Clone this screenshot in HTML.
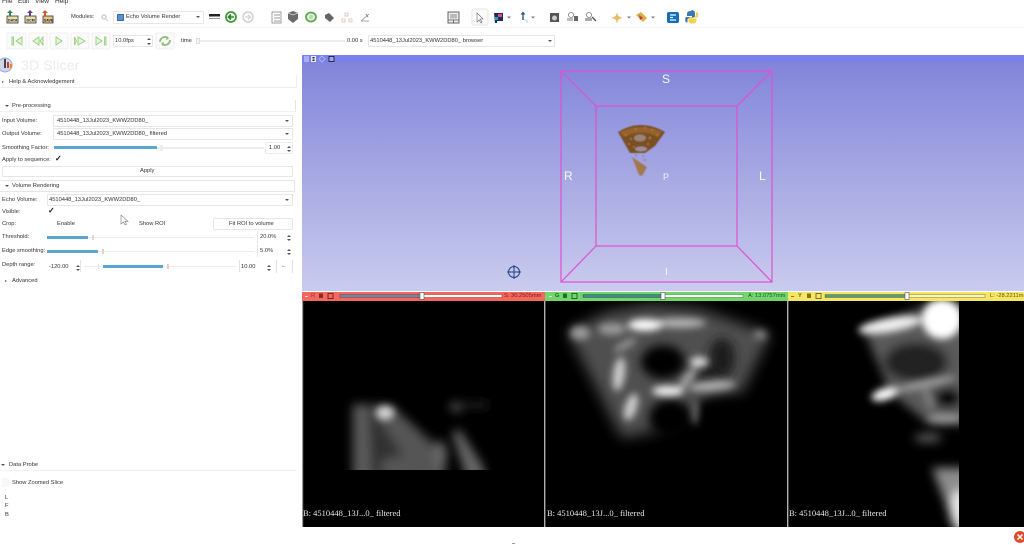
<!DOCTYPE html>
<html><head><meta charset="utf-8">
<style>
html,body{margin:0;padding:0;background:#fff;width:1024px;height:545px;overflow:hidden}
body{position:relative;font-family:"Liberation Sans",sans-serif}
.soft{position:absolute;left:0;top:0;width:1024px;height:545px;filter:blur(.3px)}
.t{position:absolute;white-space:nowrap;font-size:5.75px;line-height:8px;color:#333;transform:translateY(1px)}
.b{position:absolute;box-sizing:border-box;background:#fff;border:1px solid #e6e6e6;border-radius:1px}
.r{position:absolute}
.ar{position:absolute;width:0;height:0;border-left:2px solid transparent;border-right:2px solid transparent;border-top:2px solid #555}
.ra{position:absolute;width:0;height:0;border-top:1.5px solid transparent;border-bottom:1.5px solid transparent;border-left:2.5px solid #555}
.lbl{position:absolute;white-space:nowrap;color:#e6e6e6;font-family:"Liberation Serif",serif;font-size:8.5px;line-height:10px;filter:blur(.25px)}
.v{position:absolute;color:#fff;font-size:12px;line-height:14px;opacity:.95}
</style></head><body>
<div class="soft">
<!-- menu -->
<span class="t" style="left:2px;top:-3px;font-size:6.5px">File</span><span class="t" style="left:18px;top:-3px;font-size:6.5px">Edit</span><span class="t" style="left:35px;top:-3px;font-size:6.5px">View</span><span class="t" style="left:55px;top:-3px;font-size:6.5px">Help</span>

<!-- toolbar 1 -->
<svg class="r" style="left:0;top:0" width="1024" height="56" viewBox="0 0 1024 56">
 <rect x="0" y="27" width="1024" height="1" fill="#f4f4f4"/>
 <g stroke="#333" stroke-width=".8">
  <rect x="7" y="16" width="11" height="7" fill="#e6dcae"/><rect x="25" y="16" width="11" height="7" fill="#e6dcae"/><rect x="43" y="16" width="10" height="7" fill="#e6c48a"/>
 </g>
 <g font-family="Liberation Sans" font-size="3.6" fill="#222" font-weight="bold">
  <text x="8" y="21.500">DATA</text><text x="26.500" y="21.500">DCM</text><text x="43.800" y="21.500">SAVE</text>
 </g>
 <path d="M10 10l-3 3h6z" fill="#2f8a55"/><rect x="9" y="12" width="2" height="4" fill="#2f8a55"/>
 <path d="M30 10l-3 3h6z" fill="#6a3a90"/><rect x="29" y="12" width="2" height="4" fill="#6a3a90"/>
 <path d="M45 10l-3 3h6z" fill="#d2572a"/><rect x="44" y="12" width="2" height="4" fill="#d2572a"/>
 <circle cx="104" cy="17" r="2" fill="none" stroke="#bbb"/><path d="M105 18l3 3" stroke="#ccc"/>
 <rect x="209" y="14" width="11" height="2.500" fill="#222"/><rect x="209" y="18" width="11" height="1" fill="#999"/>
 <circle cx="231" cy="17" r="5" fill="#fff" stroke="#3d9a3a" stroke-width="1.800"/><path d="M234 17h-5M231 14.500l-2.500 2.500 2.500 2.500" stroke="#2a7c28" stroke-width="1.600" fill="none"/>
 <circle cx="248" cy="17" r="5" fill="#fff" stroke="#cfcfcf" stroke-width="1.500"/><path d="M245 17h5M248 14.500l2.500 2.500-2.500 2.500" stroke="#d2d2d2" stroke-width="1.300" fill="none"/>
 <g stroke="#777" fill="none" stroke-width=".7"><rect x="272" y="12" width="9" height="11"/><path d="M274 15h6M274 18h6M274 21h6"/></g>
 <path d="M288 13l5-2 5 2v6l-5 4-5-4z" fill="#6b6b6b"/><path d="M288 13l5 2 5-2" stroke="#ddd" fill="none" stroke-width=".7"/>
 <ellipse cx="311" cy="17" rx="5" ry="4.500" fill="#eee" stroke="#5aa84c" stroke-width="1.800"/><circle cx="311" cy="17" r="2.200" fill="#b9d9a2"/>
 <path d="M325 15l4-2 5 5-4 4-5-4z" fill="#666"/>
 <g stroke="#d9b8b4" fill="none" stroke-width=".7"><rect x="345" y="13" width="3" height="3"/><rect x="342" y="19" width="3" height="3"/><rect x="349" y="19" width="3" height="3"/></g>
 <path d="M361 21l8-7M361 21h8" stroke="#888" fill="none" stroke-width=".8"/><path d="M366 14l2 3" stroke="#b66"/>
 <!-- toolbar right -->
 <rect x="448" y="12" width="11" height="11" fill="#eee" stroke="#555" stroke-width=".9"/><path d="M448 20h11M453.500 20v3" stroke="#555" stroke-width=".8"/><rect x="450" y="14" width="7" height="4.500" fill="#bbb"/>
 <rect x="472" y="9" width="16" height="16" rx="2" fill="#fbfbfb" stroke="#e6e6e6"/>
 <path d="M477 13v9l2-2 2 3 1-1-2-3h3z" fill="#fff" stroke="#666" stroke-width=".6"/>
 <path d="M494 13h9v8h-6v2h-2z" fill="#1a2f55"/><rect x="498" y="14" width="4" height="3" fill="#e14a8f"/><rect x="495" y="17" width="3" height="3" fill="#28a0c0"/>
 <path d="M507 16.500l2 2 2-2z" fill="#777"/>
 <path d="M523 13v7" stroke="#2a5a7a" stroke-width="1.400"/><path d="M520.500 14.500l2.500-3 2.500 3" fill="#2a5a7a"/><path d="M524 20h3v3" stroke="#a8d0d0" fill="none" stroke-width=".8"/>
 <path d="M531 16.500l2 2 2-2z" fill="#777"/>
 <rect x="550" y="13" width="9" height="9" fill="#555"/><circle cx="554.500" cy="18" r="2.500" fill="#ccc"/>
 <circle cx="571" cy="15" r="2.500" fill="#fff" stroke="#777" stroke-width=".8"/><rect x="574" y="16" width="4" height="5" fill="#666"/><rect x="567" y="18" width="6" height="3" fill="#bbb"/>
 <circle cx="589" cy="15" r="2.500" fill="#fff" stroke="#777" stroke-width=".8"/><rect x="585" y="18" width="7" height="3" fill="#aaa"/><path d="M592 17l4 4" stroke="#555" stroke-width="1.300"/>
 <path d="M617 13c0 3 2 4 5 5-3 0-5 2-5 5 0-3-2-5-5-5 3-1 5-2 5-5z" fill="#e6bd6a" stroke="#e6bd6a" stroke-width=".6"/>
 <path d="M627 16.500l2 2 2-2z" fill="#777"/>
 <path d="M636 15l5-3 6 6-4 4z" fill="#dfae4c"/><path d="M639 15l4 3-3 2z" fill="#c0392b"/>
 <path d="M651 16.500l2 2 2-2z" fill="#777"/>
 <rect x="667" y="12" width="12" height="11" rx="2" fill="#1a6cb5"/><path d="M670 15h6M670 17.500h3M670 20h6" stroke="#dff" stroke-width="1.200"/>
 <path d="M691.500 11c-4 0-4.500 1.500-4.500 3v2h5v1h-5.500c-1.500 0-1.500 3-1 4.500.3 1 1 1 2 1v-2c0-1.500 1-2.500 2.500-2.500h3c1 0 2-1 2-2v-3c0-2-2-3-3.500-3z" fill="#3d7ab0"/>
 <path d="M692 23.500c4 0 4.500-1.500 4.500-3v-2h-4.500v-1h5c1.500 0 1.500-3 1-4.500-.3-1-1-1-2-.5v2c0 1.500-1 2.500-2.500 2.500h-3c-1 0-2 1-2 2v2.500c0 1.500 2 2 3.500 2z" fill="#f0d34f"/>
 <!-- row 2 icons -->
 <g fill="#fbfbfb" stroke="#efefef"><rect x="7" y="33" width="19" height="16" rx="1"/><rect x="29" y="33" width="18" height="16" rx="1"/><rect x="50" y="33" width="18" height="16" rx="1"/><rect x="71" y="33" width="18" height="16" rx="1"/><rect x="92" y="33" width="18" height="16" rx="1"/><rect x="156" y="33" width="18" height="16" rx="1"/></g>
 <g fill="#e6f5da" stroke="#94cf7a" stroke-width=".9">
  <rect x="12" y="37" width="1.500" height="8"/><path d="M22 37v8l-6-4z"/>
  <path d="M43 37v8l-3-4zM39 37v8l-6-4z"/>
  <path d="M56 37v8l6-4z"/>
  <path d="M74.500 37v8l2-4zM78 37v8l7-4z"/>
  <rect x="104.500" y="37" width="1.500" height="8"/><path d="M96 37v8l6-4z"/>
 </g>
 <path d="M160 42a5 5 0 0 1 8-4M170 40a5 5 0 0 1-8 4" stroke="#8ac276" stroke-width="1.800" fill="none"/>
 <path d="M167 36l2 3-3 1zM163 46l-2-3 3-1z" fill="#8ac276"/>
</svg>
<span class="t" style="left:71px;top:12px">Modules:</span>
<div class="b" style="left:113px;top:11px;width:91px;height:13px"></div>
<div class="r" style="left:117px;top:14px;width:7px;height:7px;background:#5a90cc;border:1px solid #3a6ca5;box-sizing:border-box"></div>
<span class="t" style="left:126px;top:12px">Echo Volume Render</span>
<div class="ar" style="left:196px;top:16px"></div>

<!-- row 2 -->
<div class="b" style="left:113px;top:35px;width:40px;height:12px"></div>
<span class="t" style="left:115px;top:36px">10.0fps</span>
<div class="ar" style="left:147px;top:43px"></div><div class="ar" style="left:147px;top:38px;transform:rotate(180deg)"></div>
<span class="t" style="left:181px;top:36px">time</span>
<div class="r" style="left:198px;top:40px;width:147px;height:2px;background:#eee"></div>
<div class="r" style="left:196px;top:38px;width:4px;height:6px;background:#f4f4f4;border:1px solid #ddd;box-sizing:border-box"></div>
<span class="t" style="left:347px;top:36px">0.00 s</span>
<div class="b" style="left:368px;top:35px;width:187px;height:12px"></div>
<span class="t" style="left:370px;top:36px">4510448_13Jul2023_KWW2DD80_ browser</span>
<div class="ar" style="left:548px;top:40px"></div>

<!-- logo -->
<svg class="r" style="left:-2px;top:56px" width="18" height="18" viewBox="0 0 18 18"><circle cx="7" cy="9" r="7" fill="#cfd6ea" stroke="#98a6cd"/><rect x="6" y="3" width="2" height="9" fill="#444"/><rect x="9" y="6" width="2" height="6" fill="#c9402f"/><rect x="12" y="8" width="2" height="4" fill="#d98a2f"/></svg>
<span class="t" style="left:21px;top:56px;font-size:14px;line-height:17px;color:#ebebf2;letter-spacing:.2px">3D Slicer</span>

<!-- help -->
<div class="ra" style="left:2px;top:80.500px"></div>
<span class="t" style="left:9px;top:77px">Help &amp; Acknowledgement</span>
<div class="r" style="left:0;top:87px;width:297px;height:1px;background:#eee"></div>
<div class="r" style="left:296px;top:75px;width:1px;height:12px;background:#eee"></div>

<!-- pre-processing -->
<div class="r" style="left:0;top:100px;width:296px;height:12px;border-right:1px solid #e4e4e4;border-bottom:1px solid #f0f0f0;box-sizing:border-box"></div>
<div class="ar" style="left:5px;top:105px"></div>
<span class="t" style="left:12px;top:101px">Pre-processing</span>
<span class="t" style="left:2px;top:116px">Input Volume:</span>
<div class="b" style="left:53px;top:115px;width:240px;height:12px"></div>
<span class="t" style="left:57px;top:116px">4510448_13Jul2023_KWW2DD80_</span><div class="ar" style="left:285px;top:120px"></div>
<span class="t" style="left:2px;top:129px">Output Volume:</span>
<div class="b" style="left:53px;top:128px;width:240px;height:12px"></div>
<span class="t" style="left:57px;top:129px">4510448_13Jul2023_KWW2DD80_ filtered</span><div class="ar" style="left:285px;top:133px"></div>
<span class="t" style="left:2px;top:143px">Smoothing Factor:</span>
<div class="r" style="left:54px;top:147px;width:210px;height:2px;background:#ececec"></div>
<div class="r" style="left:54px;top:146px;width:103px;height:3px;background:#5aa6d2"></div>
<div class="r" style="left:160px;top:145px;width:3px;height:6px;background:#eee"></div>
<div class="b" style="left:265px;top:142px;width:28px;height:12px;border-color:#ececec"></div>
<span class="t" style="left:269px;top:143px">1.00</span>
<div class="ar" style="left:287px;top:150px"></div><div class="ar" style="left:287px;top:146px;transform:rotate(180deg)"></div>
<span class="t" style="left:2px;top:155px">Apply to sequence:</span>
<span class="t" style="left:55px;top:154px;font-size:8px;color:#111;font-weight:bold">✓</span>
<div class="b" style="left:2px;top:166px;width:291px;height:11px"></div>
<span class="t" style="left:140px;top:166px">Apply</span>

<!-- volume rendering -->
<div class="b" style="left:0;top:180px;width:295px;height:12px;border-left:none"></div>
<div class="ar" style="left:5px;top:185px"></div>
<span class="t" style="left:12px;top:181px">Volume Rendering</span>
<span class="t" style="left:2px;top:195px">Echo Volume:</span>
<div class="b" style="left:47px;top:194px;width:246px;height:12px"></div>
<span class="t" style="left:49px;top:195px">4510448_13Jul2023_KWW2DD80_</span><div class="ar" style="left:285px;top:199px"></div>
<span class="t" style="left:2px;top:207px">Visible:</span>
<span class="t" style="left:48px;top:206px;font-size:8px;color:#111;font-weight:bold">✓</span>
<span class="t" style="left:2px;top:219px">Crop:</span>
<span class="t" style="left:57px;top:219px">Enable</span>
<span class="t" style="left:139px;top:219px">Show ROI</span>
<div class="b" style="left:213px;top:218px;width:80px;height:12px"></div>
<span class="t" style="left:229px;top:219px">Fit ROI to volume</span>
<svg class="r" style="left:120px;top:214px" width="10" height="12" viewBox="0 0 10 12"><path d="M1 1v9l2.500-2 1.500 3 1.500-.7-1.500-3h3z" fill="#fff" stroke="#777" stroke-width=".6"/></svg>

<span class="t" style="left:2px;top:232px">Threshold:</span>
<div class="r" style="left:47px;top:237px;width:207px;height:1px;background:#ececec"></div>
<div class="r" style="left:47px;top:236px;width:41px;height:3px;background:#5aa6d2"></div>
<div class="r" style="left:92px;top:235px;width:2px;height:5px;background:#ddd"></div>
<div class="r" style="left:257px;top:231px;width:1px;height:12px;background:#e5e5e5"></div>
<span class="t" style="left:260px;top:232px">20.0%</span>
<div class="ar" style="left:287px;top:239px"></div><div class="ar" style="left:287px;top:235px;transform:rotate(180deg)"></div>

<span class="t" style="left:2px;top:246px">Edge smoothing:</span>
<div class="r" style="left:47px;top:251px;width:207px;height:1px;background:#ececec"></div>
<div class="r" style="left:47px;top:250px;width:51px;height:3px;background:#5aa6d2"></div>
<div class="r" style="left:102px;top:249px;width:2px;height:5px;background:#eccfc4"></div>
<div class="r" style="left:257px;top:245px;width:1px;height:12px;background:#e5e5e5"></div>
<span class="t" style="left:260px;top:246px">5.0%</span>
<div class="ar" style="left:287px;top:253px"></div><div class="ar" style="left:287px;top:249px;transform:rotate(180deg)"></div>

<span class="t" style="left:2px;top:260px">Depth range:</span>
<div class="r" style="left:47px;top:260px;width:34px;height:12px;border-right:1px solid #e5e5e5;box-sizing:border-box"></div>
<span class="t" style="left:49px;top:262px">-120.00</span>
<div class="ar" style="left:76px;top:269px"></div><div class="ar" style="left:76px;top:265px;transform:rotate(180deg)"></div>
<div class="r" style="left:84px;top:266px;width:153px;height:1px;background:#ececec"></div>
<div class="r" style="left:98px;top:264px;width:1px;height:5px;background:#ddd"></div>
<div class="r" style="left:103px;top:265px;width:60px;height:3px;background:#5aa6d2"></div>
<div class="r" style="left:167px;top:264px;width:2px;height:5px;background:#eccfc4"></div>
<div class="r" style="left:239px;top:260px;width:1px;height:12px;background:#e5e5e5"></div>
<span class="t" style="left:241px;top:262px">10.00</span>
<div class="ar" style="left:267px;top:269px"></div><div class="ar" style="left:267px;top:265px;transform:rotate(180deg)"></div>
<div class="r" style="left:276px;top:260px;width:17px;height:13px;border-left:1px solid #e2e2e2;border-right:1px solid #e2e2e2;box-sizing:border-box"></div>
<span class="t" style="left:281px;top:261px">←</span>

<div class="ra" style="left:5px;top:280px"></div>
<span class="t" style="left:12px;top:276px">Advanced</span>

<!-- data probe -->
<div class="ar" style="left:1px;top:464px"></div>
<span class="t" style="left:9px;top:460px">Data Probe</span>
<div class="r" style="left:0;top:470px;width:297px;height:1px;background:#f2f2f2"></div>
<div class="r" style="left:2px;top:478px;width:7px;height:9px;background:#f8f8f8"></div>
<span class="t" style="left:12px;top:478px">Show Zoomed Slice</span>
<span class="t" style="left:5px;top:493px">L</span>
<span class="t" style="left:5px;top:501px">F</span>
<span class="t" style="left:5px;top:510px">B</span>
</div>

<!-- 3D view -->
<div class="r" style="left:302px;top:55px;width:722px;height:236px;background:linear-gradient(#7f82d9 0%,#8b8edc 15%,#a9abe3 55%,#c9cbee 100%)"></div>
<div class="r" style="left:302px;top:55px;width:722px;height:7px;background:#7a80ec"></div>
<svg class="r" style="left:302px;top:55px" width="722" height="236" viewBox="302 55 722 236">
 <rect x="304" y="56" width="5" height="6" fill="#a9adf2"/><rect x="311" y="56" width="5" height="6" fill="#e8e8f8"/><rect x="312.500" y="57" width="2" height="1.500" fill="#223"/><rect x="312.500" y="59.500" width="2" height="1.500" fill="#223"/>
 <path d="M322 56l3 3-3 3-3-3z" fill="none" stroke="#b8bcf5" stroke-width=".8"/>
 <rect x="329" y="56.500" width="5" height="5" fill="#9fa4f0" stroke="#223" stroke-width=".9"/>
 <g stroke="#e04fd2" stroke-width="1.200" fill="none">
  <rect x="561" y="71" width="211" height="211"/>
  <rect x="596" y="106" width="141" height="140"/>
  <path d="M561 71l35 35M772 71l-35 35M561 282l35-36M772 282l-35-36"/>
 </g>
 <g fill="none" stroke="#20408a" stroke-width="1"><circle cx="514" cy="272" r="5.500"/><path d="M514 265v14M507 272h14"/></g>
 <defs><filter id="b05"><feGaussianBlur stdDeviation=".6"/></filter></defs>
 <g filter="url(#b05)">
  <path d="M618 132Q641 118 665 132L655 146 645 153 630 153z" fill="#7a5028"/>
  <path d="M620 132Q641 122 662 132L658 137Q641 128 624 137z" fill="#96622c"/>
  <path d="M632 157l15 10-5 9-3-1z" fill="#a27850"/>
  <ellipse cx="640" cy="138" rx="6" ry="3.500" fill="#9c8478"/>
  <ellipse cx="641" cy="149" rx="6" ry="2.500" fill="#9c8e98"/>
  <g fill="#b07a36">
   <circle cx="626" cy="135" r="1"/><circle cx="631" cy="139" r="1"/><circle cx="636" cy="129" r="1"/><circle cx="645" cy="128" r="1"/><circle cx="652" cy="130" r="1"/><circle cx="650" cy="138" r="1.200"/><circle cx="657" cy="135" r="1"/><circle cx="629" cy="144" r="1"/><circle cx="634" cy="147" r=".9"/><circle cx="648" cy="144" r="1"/>
  </g>
  <g fill="#8a7060"><circle cx="636" cy="155" r=".8"/><circle cx="643" cy="156" r=".7"/><circle cx="645" cy="160" r=".8"/></g>
 </g>
</svg>
<span class="v" style="left:662px;top:72px">S</span>
<span class="v" style="left:564px;top:169px">R</span>
<span class="v" style="left:759px;top:169px">L</span>
<span class="v" style="left:663px;top:170px;font-size:9px;opacity:.85">P</span>
<span class="v" style="left:665px;top:266px;font-size:10px">I</span>

<!-- slice bars -->
<div class="r" style="left:302px;top:292px;width:243px;height:9px;background:#f2685c"></div>
<div class="r" style="left:545px;top:292px;width:243px;height:9px;background:#74d46e"></div>
<div class="r" style="left:788px;top:292px;width:236px;height:9px;background:#f5e765"></div>
<svg class="r" style="left:302px;top:292px" width="722" height="9" viewBox="302 292 722 9">
 <rect x="305" y="296" width="3" height="1" fill="#fff" opacity=".7"/>
 <rect x="319" y="293.500" width="4" height="4.500" fill="#8a2a22"/><rect x="328" y="293.500" width="5" height="5" fill="none" stroke="#5a1a14" stroke-width=".8"/>
 <rect x="340" y="294.500" width="81" height="3" fill="#7f7f9e" stroke="#444" stroke-width=".4"/>
 <rect x="423" y="294.500" width="79" height="3" fill="#fff" stroke="#9a2a20" stroke-width=".5"/>
 <rect x="420" y="292.500" width="4" height="7" fill="#fff" stroke="#555" stroke-width=".6"/>
 <rect x="549" y="296" width="3" height="1" fill="#fff" opacity=".7"/>
 <rect x="563" y="293.500" width="4" height="4.500" fill="#2a6a2a"/><rect x="572" y="293.500" width="5" height="5" fill="none" stroke="#1a4a1a" stroke-width=".8"/>
 <rect x="583" y="294.500" width="79" height="3" fill="#3f8f80" stroke="#245" stroke-width=".4"/>
 <rect x="664" y="294.500" width="79" height="3" fill="#f3fbef" stroke="#2a7a2a" stroke-width=".5"/>
 <rect x="661" y="292.500" width="4" height="7" fill="#fff" stroke="#555" stroke-width=".6"/>
 <rect x="791" y="296" width="3" height="1" fill="#8a7a10"/>
 <rect x="807" y="293.500" width="4" height="4.500" fill="#8a7010"/><rect x="816" y="293.500" width="5" height="5" fill="none" stroke="#553" stroke-width=".8"/>
 <rect x="825" y="294.500" width="80" height="3" fill="#5d9a7c" stroke="#453" stroke-width=".4"/>
 <rect x="908" y="294.500" width="77" height="3" fill="#faf3c4" stroke="#8a7a10" stroke-width=".5"/>
 <rect x="905" y="292.500" width="4" height="7" fill="#fff" stroke="#555" stroke-width=".6"/>
</svg>
<span class="t" style="left:311px;top:291px;color:#a82a20">R</span>
<span class="t" style="left:555px;top:291px;color:#1a6a1a;font-weight:bold">G</span>
<span class="t" style="left:798px;top:291px;color:#6a5a10;font-weight:bold">Y</span>
<span class="t" style="left:504px;top:291px;color:#7a1a12">S: 30.2505mm</span>
<span class="t" style="left:748px;top:291px;color:#155a15">A: 13.0757mm</span>
<span class="t" style="left:990px;top:291px;color:#5a5010">L: -28.2211mm</span>

<!-- slices -->
<svg class="r" style="left:302px;top:301px" width="722" height="226" viewBox="302 301 722 226">
 <defs>
  <filter id="b2" filterUnits="userSpaceOnUse" x="302" y="250" width="722" height="330"><feGaussianBlur stdDeviation="3.600"/></filter>
  <filter id="b3" filterUnits="userSpaceOnUse" x="302" y="250" width="722" height="330"><feGaussianBlur stdDeviation="5"/></filter>
  <filter id="b5" filterUnits="userSpaceOnUse" x="302" y="250" width="722" height="330"><feGaussianBlur stdDeviation="7"/></filter>
  <clipPath id="cr"><rect x="302" y="301" width="242" height="169"/></clipPath>
  <clipPath id="cg"><rect x="545" y="301" width="242" height="226"/></clipPath>
  <clipPath id="cy"><rect x="788" y="301" width="171" height="226"/></clipPath>
 </defs>
 <rect x="302" y="301" width="722" height="226" fill="#000"/>
 <!-- red -->
 <g clip-path="url(#cr)">
  <g filter="url(#b3)">
   <path d="M352 404h38l52 44 6 34H352z" fill="#333"/>
   <path d="M354 405h14l4 80h-18z" fill="#5a5a5a"/>
   <path d="M372 408l20-2 50 52 4 26-24 0z" fill="#555"/>
   <ellipse cx="400" cy="468" rx="20" ry="12" fill="#555"/>
   <ellipse cx="440" cy="455" rx="7" ry="14" fill="#666"/>
   <ellipse cx="456" cy="407" rx="6" ry="5" fill="#555"/>
   <path d="M452 432l8-2 24 38 0 16-16 0z" fill="#666"/>
   <rect x="465" y="402" width="24" height="6" fill="#222"/>
  </g>
  <g filter="url(#b2)"><ellipse cx="385" cy="413" rx="9" ry="7" fill="#d0d0d0"/></g>
 </g>
 <!-- green -->
 <g clip-path="url(#cg)">
  <g filter="url(#b5)"><path d="M568 332L607 312 650 305 700 309 770 334 742 392 700 402 672 425 650 432 622 438z" fill="#505050"/></g>
  <g filter="url(#b3)">
   <ellipse cx="722" cy="358" rx="13" ry="20" fill="#1c1c1c"/>
   <ellipse cx="663" cy="362" rx="22" ry="17" fill="#000"/>
   <ellipse cx="706" cy="373" rx="11" ry="5" fill="#111"/>
   <ellipse cx="670" cy="418" rx="21" ry="19" fill="#000"/>
   <ellipse cx="722" cy="410" rx="24" ry="10" fill="#000"/>
  </g>
  <g filter="url(#b2)">
   <ellipse cx="680" cy="323" rx="26" ry="5" fill="#b4b4b4"/>
   <ellipse cx="612" cy="329" rx="14" ry="6" fill="#999"/>
   <ellipse cx="580" cy="333" rx="10" ry="7" fill="#999"/>
   <ellipse cx="760" cy="335" rx="7" ry="5" fill="#808080"/>
   <ellipse cx="619" cy="374" rx="6" ry="17" transform="rotate(8 619 374)" fill="#ccc"/>
   <ellipse cx="631" cy="407" rx="6" ry="14" transform="rotate(18 631 407)" fill="#ccc"/>
   <ellipse cx="668" cy="391" rx="16" ry="5" fill="#f4f4f4"/>
   <ellipse cx="712" cy="386" rx="24" ry="4.500" transform="rotate(-5 712 386)" fill="#b4b4b4"/>
   <ellipse cx="699" cy="362" rx="9" ry="5" fill="#e0e0e0"/>
   <ellipse cx="688" cy="378" rx="4" ry="13" transform="rotate(40 688 378)" fill="#a8a8a8"/>
   <ellipse cx="625" cy="345" rx="13" ry="4" transform="rotate(-30 625 345)" fill="#909090"/>
   <ellipse cx="695" cy="412" rx="3" ry="13" fill="#777"/>
   <ellipse cx="645" cy="325" rx="17" ry="6" fill="#fff"/>
   <ellipse cx="645" cy="325" rx="13" ry="4" fill="#fff"/>
  </g>
 </g>
 <!-- yellow -->
 <g clip-path="url(#cy)">
  <g filter="url(#b3)">
   <path d="M864 330L930 304H975V425H930L890 392z" fill="#5a5a5a"/>
   <ellipse cx="916" cy="362" rx="32" ry="20" fill="#222"/>
   <ellipse cx="948" cy="398" rx="14" ry="10" fill="#000"/>
   <path d="M932 468H975V535H958z" fill="#8c8c8c"/>
   <ellipse cx="960" cy="510" rx="10" ry="20" fill="#e6e6e6"/>
   <ellipse cx="928" cy="438" rx="14" ry="4" fill="#666"/>
  </g>
  <g filter="url(#b2)">
   <ellipse cx="890" cy="325" rx="32" ry="7" transform="rotate(-10 890 325)" fill="#f0f0f0"/>
   <ellipse cx="885" cy="394" rx="14" ry="6" transform="rotate(-18 885 394)" fill="#fff"/>
   <ellipse cx="925" cy="384" rx="32" ry="4" transform="rotate(-12 925 384)" fill="#9c9c9c"/>
   <ellipse cx="945" cy="418" rx="18" ry="4" fill="#999"/>
   <ellipse cx="928" cy="398" rx="4" ry="13" transform="rotate(-20 928 398)" fill="#7c7c7c"/>
   <circle cx="942" cy="319" r="20" fill="#fff"/>
   <circle cx="942" cy="319" r="17" fill="#fff"/>
  </g>
 </g>
 <rect x="302" y="470" width="242" height="57" fill="#000"/>
 <rect x="302" y="301" width="1.200" height="226" fill="#9a9a9a"/>
 <rect x="544" y="301" width="1.400" height="226" fill="#b0b0b0"/>
 <rect x="787" y="301" width="1.400" height="226" fill="#b0b0b0"/>
</svg>
<span class="lbl" style="left:303px;top:508px">B: 4510448_13J...0_ filtered</span>
<span class="lbl" style="left:547px;top:508px">B: 4510448_13J...0_ filtered</span>
<span class="lbl" style="left:789px;top:508px">B: 4510448_13J...0_ filtered</span>

<!-- error icon -->
<svg class="r" style="left:1012px;top:529px" width="12" height="16" viewBox="0 0 12 16"><circle cx="8" cy="8" r="6" fill="#e2482a"/><path d="M5.500 5.500l5 5M10.500 5.500l-5 5" stroke="#fff" stroke-width="1.500"/></svg>
<div class="r" style="left:512px;top:543px;width:3px;height:1px;background:#999"></div>
</body></html>
